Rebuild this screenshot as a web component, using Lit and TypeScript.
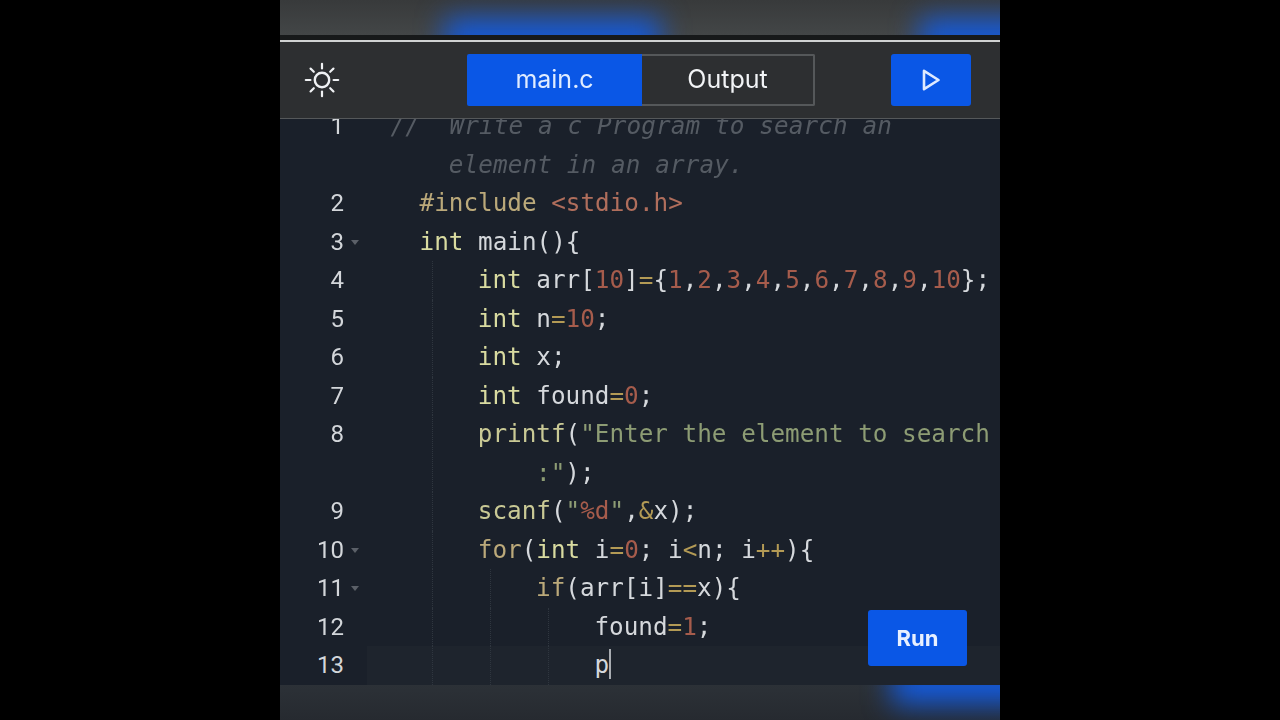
import { LitElement, html, css, svg } from "lit";
import { customElement } from "lit/decorators.js";

type Tok = [string, string];
interface Line { n: number; level: number; fold?: boolean; outdent?: boolean; current?: boolean; toks: Tok[]; wrap?: Tok[]; }

const t = (s: string): Tok => ["id", s];
const k = (s: string): Tok => ["kw", s];
const c = (s: string): Tok => ["ctl", s];
const o = (s: string): Tok => ["op", s];
const v = (s: string): Tok => ["num", s];
const s = (x: string): Tok => ["str", x];
const f = (x: string): Tok => ["fn", x];

const nums: Tok[] = [];
for (let i = 1; i <= 10; i++) { nums.push(v(String(i))); if (i < 10) nums.push(t(",")); }

const LINES: Line[] = [
  { n: 1, level: 0, outdent: true, toks: [["cm", "//  Write a c Program to search an"]], wrap: [["cm", "element in an array."]] },
  { n: 2, level: 0, toks: [c("#include "), ["inc", "<stdio.h>"]] },
  { n: 3, level: 0, fold: true, toks: [k("int"), t(" main(){")] },
  { n: 4, level: 1, toks: [k("int"), t(" arr["), v("10"), t("]"), o("="), t("{"), ...nums, t("};")] },
  { n: 5, level: 1, toks: [k("int"), t(" n"), o("="), v("10"), t(";")] },
  { n: 6, level: 1, toks: [k("int"), t(" x;")] },
  { n: 7, level: 1, toks: [k("int"), t(" found"), o("="), v("0"), t(";")] },
  { n: 8, level: 1, toks: [f("printf"), t("("), s('"Enter the element to search')], wrap: [s(':"'), t(");")] },
  { n: 9, level: 1, toks: [f("scanf"), t("("), s('"'), v("%d"), s('"'), t(","), o("&"), t("x);")] },
  { n: 10, level: 1, fold: true, toks: [c("for"), t("("), k("int"), t(" i"), o("="), v("0"), t("; i"), o("<"), t("n; i"), o("++"), t("){")] },
  { n: 11, level: 2, fold: true, toks: [c("if"), t("(arr[i]"), o("=="), t("x){")] },
  { n: 12, level: 3, toks: [t("found"), o("="), v("1"), t(";")] },
  { n: 13, level: 3, current: true, toks: [t("p")] },
];

@customElement("app-root")
export class AppRoot extends LitElement {
  static styles = css`
    :host { display: block; width: 1280px; height: 720px; background: #000; overflow: hidden; }
    .frame { width: 720px; height: 720px; margin: 0 auto; display: flex; flex-direction: column; position: relative; background: #1a202a; overflow: hidden; }
    .top { height: 35px; flex: none; position: relative; overflow: hidden; background: linear-gradient(#383a3b, #434647); }
    .glow { position: absolute; background: #1459d8; filter: blur(14px); }
    .g1 { left: 165px; width: 215px; top: 18px; height: 40px; }
    .g2 { left: 640px; width: 140px; top: 18px; height: 40px; }
    .g3 { left: 612px; width: 160px; top: -25px; height: 45px; }
    .gap { height: 5px; flex: none; background: #17191a; }
    .rule { height: 2px; flex: none; background: #d0d2d2; }
    .bar { height: 77px; flex: none; box-sizing: border-box; background: #2d2f31; border-bottom: 1px solid #55585a; display: flex; align-items: center; padding: 0 29px 1px 24px; position: relative; z-index: 2; }
    .sun { width: 36px; height: 36px; display: block; flex: none; }
    .tabs { display: flex; margin-left: 127px; height: 52px; filter: blur(0.35px); }
    .tab { display: flex; align-items: center; justify-content: center; font: 400 25px/1 Inter, "Noto Sans", sans-serif; color: #f2f4f6; box-sizing: border-box; }
    .tab.on { width: 175px; background: #0a57e6; color: #e0ecff; border-radius: 2px 0 0 2px; }
    .tab.off { width: 173px; border: 2px solid #55585a; border-left: none; border-radius: 0 2px 2px 0; }
    .play { width: 80px; height: 52px; margin-left: auto; background: #0a57e6; border-radius: 3px; display: flex; align-items: center; justify-content: center; }
    .play svg { width: 20px; height: 22px; display: block; }
    .editor { flex: 1; min-height: 0; overflow: hidden; background: #1a202a; font: 24.3px/38.5px "DejaVu Sans Mono", monospace; }
    .lines { margin-top: -12px; filter: blur(0.4px); }
    .row { display: flex; position: relative; }
    .num { flex: none; width: 64px; text-align: right; font: 24px/38.5px Roboto, sans-serif; color: #d3d6da; }
    .fold { flex: none; width: 75.5px; position: relative; }
    .fold.has::before { content: ""; display: block; position: absolute; left: 7px; top: 17px; border: 4.5px solid transparent; border-top: 5px solid #5b6068; border-bottom: none; }
    .indent { flex: none; width: 58.3px; box-sizing: border-box; padding-left: 12px; }
    .indent i { display: block; height: 100%; border-left: 1px dotted #2f363f; }
    .code { white-space: pre; color: #d5d8dc; }
    .row.outdent .code { margin-left: -29px; }
    .wrap { padding-left: 58.3px; }
    .row.current { background: linear-gradient(90deg, #1a202a 87px, #1e242d 87px); }
    .caret { display: inline-block; width: 2px; height: 30px; background: #a9adb2; vertical-align: -6px; }
    .id { color: #d5d8dc; }
    .kw { color: #d9dba0; }
    .ctl { color: #bba97a; }
    .op { color: #b39a55; }
    .num-t { color: #a65c4c; }
    .str { color: #8d9c74; }
    .inc { color: #b06e5c; }
    .fn { color: #c9c995; }
    .cm { color: #555b63; font-style: italic; letter-spacing: 0.12px; }
    .bottom { height: 35px; flex: none; position: relative; overflow: hidden; background: linear-gradient(#2c3137, #262a30); }
    .run { position: absolute; left: 588px; top: 610px; width: 99px; height: 56px; background: #0a57e6; border-radius: 3px; color: #e8f0ff; font: 700 22px/56px Inter, Roboto, sans-serif; text-align: center; z-index: 3; filter: blur(0.3px); }
  `;

  private sun() {
    const rays = [0, 45, 90, 135, 180, 225, 270, 315];
    return html`<svg class="sun" viewBox="0 0 36 36" fill="none" stroke="#f0f2f4" stroke-linecap="round">
      <circle cx="18" cy="18" r="7.2" stroke-width="2.4"></circle>
      ${rays.map((a) => svg`<line x1="18" y1="1.8" x2="18" y2="6.4" stroke-width="2.2" transform="rotate(${a} 18 18)"></line>`)}
    </svg>`;
  }

  private toks(list: Tok[]) {
    return list.map(([cls, text]) => html`<span class=${cls === "num" ? "num-t" : cls}>${text}</span>`);
  }

  private row(l: Line) {
    const indents = Array.from({ length: l.level }, () => html`<div class="indent"><i></i></div>`);
    return html`<div class="row ${l.outdent ? "outdent" : ""} ${l.current ? "current" : ""}">
      <div class="num">${l.n}</div>
      <div class="fold ${l.fold ? "has" : ""}"></div>
      ${indents}
      <div class="code"><div>${this.toks(l.toks)}${l.current ? html`<span class="caret"></span>` : ""}</div>${l.wrap ? html`<div class="wrap">${this.toks(l.wrap)}</div>` : ""}</div>
    </div>`;
  }

  render() {
    return html`<div class="frame">
      <div class="top"><div class="glow g1"></div><div class="glow g2"></div></div>
      <div class="gap"></div>
      <div class="rule"></div>
      <div class="bar">
        ${this.sun()}
        <div class="tabs"><div class="tab on">main.c</div><div class="tab off">Output</div></div>
        <div class="play"><svg viewBox="0 0 20 22" fill="none" stroke="#dfeaff" stroke-width="2.6" stroke-linejoin="round"><path d="M3 1.8 L17.5 11 L3 20.2 Z"></path></svg></div>
      </div>
      <div class="editor"><div class="lines">${LINES.map((l) => this.row(l))}</div></div>
      <div class="bottom"><div class="glow g3"></div></div>
      <div class="run">Run</div>
    </div>`;
  }
}
